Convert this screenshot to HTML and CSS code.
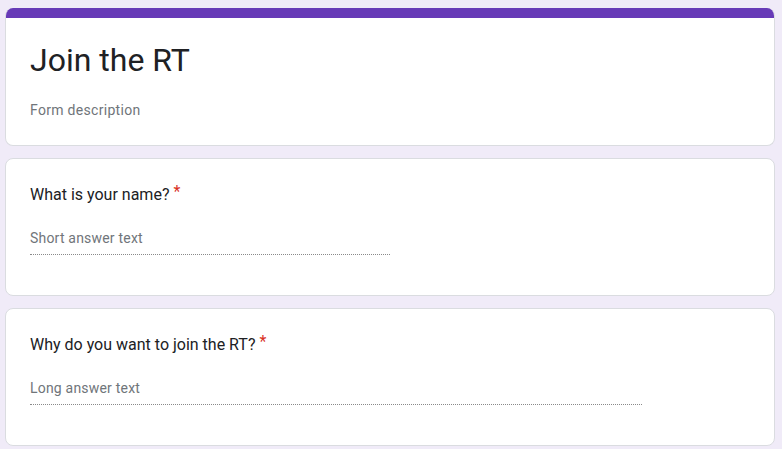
FILE: index.html
```html
<!DOCTYPE html>
<html>
<head>
<meta charset="utf-8">
<link rel="stylesheet" href="styles.css">
</head>
<body>
<div class="page">
  <div class="card header-card">
    <div class="band"></div>
    <div class="header-body">
      <div class="title">Join the RT</div>
      <div class="desc">Form description</div>
    </div>
  </div>
  <div class="card q-card">
    <div class="question">What is your name?<span class="req">*</span></div>
    <div class="answer short">Short answer text</div>
  </div>
  <div class="card q-card">
    <div class="question">Why do you want to join the RT?<span class="req">*</span></div>
    <div class="answer long">Long answer text</div>
  </div>
</div>
</body>
</html>
```

FILE: styles.css
```css
html, body {
  margin: 0;
  padding: 0;
  background: #f0ebf8;
  font-family: Roboto, "Liberation Sans", sans-serif;
}
.page {
  display: flex;
  flex-direction: column;
  gap: 12px;
  padding: 8px 7px 0 5px;
}
.card {
  background: #fff;
  border: 1px solid #dadce0;
  border-radius: 8px;
  box-sizing: border-box;
}
.header-card {
  border-top: none;
  overflow: hidden;
}
.band {
  height: 10px;
  background: #673ab7;
}
.header-body {
  padding: 22px 24px 25px;
}
.title {
  font-size: 32px;
  line-height: 40px;
  color: #202124;
}
.desc {
  margin-top: 20px;
  font-size: 14px;
  line-height: 20px;
  letter-spacing: 0.3px;
  color: #70757a;
}
.q-card {
  padding: 24px 24px 40px;
}
.question {
  font-size: 16px;
  line-height: 24px;
  color: #202124;
}
.req {
  color: #d93025;
  margin-left: 4px;
  position: relative;
  top: -3px;
}
.answer {
  margin-top: 21px;
  font-size: 14px;
  line-height: 20px;
  letter-spacing: 0.2px;
  color: #70757a;
  padding-bottom: 6px;
  border-bottom: 1px dotted #8a8a8a;
}
.short { width: 360px; }
.long { width: 612px; }
```
